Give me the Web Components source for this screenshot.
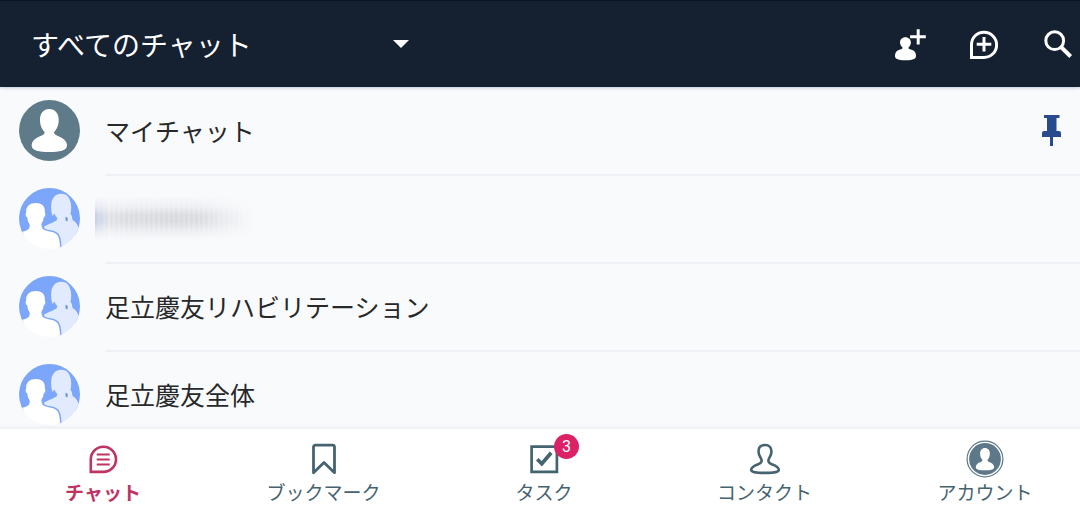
<!DOCTYPE html>
<html lang="ja">
<head>
<meta charset="utf-8">
<meta name="viewport" content="width=device-width, initial-scale=1">
<title>チャット</title>
<style>
  html, body { margin: 0; height: 100%; }
  body { font-family: "Noto Sans CJK JP", sans-serif; color: #262829; background: #f9fafc; }
</style>
</head>
<body>
<chat-app></chat-app>
<script>
const icons = {
  addPerson: `<svg width="32" height="32" viewBox="0 0 32 32" fill="#fff"><path d="M11.3 9.300c-3.200 0-5.300 2.300-5.300 5.200 0 2.400 1.200 3.600 2.400 4.800.6 1.600-1 1.900-2.900 2.500C2.700 22.700 1 24.500 1 27.500c0 3.300 2 4.700 10.500 4.700S22 30.800 22 27.500c0-3-1.700-4.800-4.500-5.700-2-.6-3.500-.9-2.900-2.500 1.200-1.200 2.300-2.400 2.300-4.800 0-2.900-2.300-5.200-5.600-5.200z"/><path d="M22.700 1.200h3v6h6.100v3h-6.100v6.200h-3v-6.200h-6.600v-3h6.600z"/></svg>`,
  addChat: `<svg width="32" height="32" viewBox="0 0 32 32" fill="none" stroke="#fff" stroke-width="3"><path d="M3.500 29.500V17C3.500 9.300 9 4.300 16 4.300A12.600 12.600 0 0 1 16 29.500z"/><path d="M8.700 16.200h14.600M16 9v14.400"/></svg>`,
  search: `<svg width="32" height="32" viewBox="0 0 32 32" fill="none" stroke="#fff"><circle cx="12.700" cy="12.700" r="8.900" stroke-width="3"/><path d="M19 19l9.700 9.500" stroke-width="3.900"/></svg>`,
  chat: `<svg width="38" height="38" viewBox="0 0 38 38" fill="none" stroke="currentColor" stroke-width="2.600"><path d="M6.800 31.900V19A12.600 12.600 0 1 1 19.300 31.900z" /><path d="M12.700 14.500h13M12.700 19.500h13M12.700 24.500h13" stroke-width="1.900"/></svg>`,
  bookmark: `<svg width="38" height="38" viewBox="0 0 38 38" fill="none" stroke="currentColor" stroke-width="2.800" stroke-linejoin="round"><path d="M8.500 32.700V7.200q0-2 2-2h17q2 0 2 2v25.500L19 22.600z"/></svg>`,
  task: `<svg width="38" height="38" viewBox="0 0 38 38" fill="none" stroke="currentColor"><path d="M6.600 6.700h25.300v25.200H6.600z" stroke-width="2.700"/><path d="M12.300 19.300l4.500 4.500 9.400-11" stroke-width="3.700"/></svg>`,
  contact: `<svg width="38" height="38" viewBox="0 0 38 38" fill="none" stroke="currentColor" stroke-width="2.600"><path d="M19 5c-4.300 0-6.500 2.700-6.500 6.500 0 3.200 1.400 5 2.600 7.200 1.200 2.600.1 4.400-2.900 5.500-4.400 1.600-7 3-7 5.600 0 2.300 3.300 3.100 13.800 3.100s13.800-.8 13.800-3.100c0-2.600-2.600-4-7-5.600-3-1.100-4.100-2.900-2.900-5.500 1.200-2.200 2.600-4 2.600-7.200 0-3.800-2.200-6.500-6.500-6.500z"/></svg>`,
};
const person = 'M30.300 9C24.500 9 21 13.500 21 19.500 21 25.500 23 29.500 25.600 32 26 34.500 23 35.400 20 36.700 15.500 38.700 12.700 41.500 12.700 45.500 12.700 50.500 20 52 30.300 52S48 50.500 48 45.500C48 41.500 45 38.700 40.600 36.700 37.600 35.400 34.700 34.500 35.100 32 37.700 29.500 39.700 25.500 39.700 19.500 39.700 13.500 36 9 30.300 9z';
icons.account = `<svg width="38" height="38" viewBox="0 0 38 38"><circle cx="19" cy="19" r="17.900" fill="#fff" stroke="#5d7989" stroke-width="1.200"/><circle cx="19" cy="19" r="15.900" fill="#5d7989"/><path transform="translate(3.200 3.300) scale(.52 .52)" fill="#fff" d="${person}"/></svg>`;

function define(name, render) {
  customElements.define(name, class extends HTMLElement {
    connectedCallback() {
      if (this.shadowRoot) return;
      this.attachShadow({ mode: 'open' }).innerHTML = render(this);
    }
  });
}

define('icon-button', el => `
  <style>
    :host { display: block; }
    button { display: block; padding: 0; border: 0; background: none; cursor: pointer; }
    svg { display: block; overflow: visible; }
  </style>
  <button type="button" aria-label="${el.getAttribute('label')}">${icons[el.getAttribute('icon')]}</button>`);

define('chat-header', () => `
  <style>
    :host { display: block; position: relative; z-index: 1; }
    header { display: flex; align-items: center; justify-content: space-between; box-sizing: border-box;
      min-height: 87px; padding: 0 6px 0 31px; background: #152130; box-shadow: 0 1px 3px #bdc7d7; border-top: 1px solid #071626; }
    .filter { display: grid; align-items: center; flex: 0 1 378px; }
    .filter > * { grid-area: 1 / 1; }
    select { appearance: none; width: 100%; height: 40px; margin: 0; padding: 0 32px 0 0; border: 0;
      background: none; color: #fff; font: 28px/40px "Noto Sans CJK JP", sans-serif; cursor: pointer; }
    option { color: #262829; }
    .filter svg { justify-self: end; pointer-events: none; }
    .actions { display: flex; gap: 42px; }
  </style>
  <header>
    <div class="filter">
      <select aria-label="チャットの絞り込み"><option>すべてのチャット</option></select>
      <svg width="16" height="8" viewBox="0 0 16 8"><path d="M0 0h16L8 8z" fill="#fff"/></svg>
    </div>
    <div class="actions">
      <icon-button icon="addPerson" label="コンタクトを追加"></icon-button>
      <icon-button icon="addChat" label="チャットを追加"></icon-button>
      <icon-button icon="search" label="検索"></icon-button>
    </div>
  </header>`);

define('chat-avatar', el => `
  <style>
    :host { display: block; flex: none; }
    svg { display: block; }
  </style>
  ${el.getAttribute('kind') === 'person'
    ? `<svg width="61" height="61" viewBox="0 0 61 61"><circle cx="30.500" cy="30.500" r="30.500" fill="#5f7b89"/><path fill="#fff" d="${person}"/></svg>`
    : `<svg width="61" height="61" viewBox="0 0 61 61">
        <defs><clipPath id="round"><circle cx="30.500" cy="30.500" r="30.500"/></clipPath></defs>
        <g clip-path="url(#round)">
          <path fill="#7ba6fa" d="M0 0h61v47H0z"/>
          <path fill="#e1ebfd" d="M42 5.700C35.500 5.900 32.500 11 32.200 17c-.2 4 0 8 1.500 11l1.600-2.500 1.700 3.200c2 .5 1.300 3.400-.5 4.300-3.500 1.900-8 3.500-12 6L27 43l9 1.500c4 1 5 4 6 16.500h19V42l-1.500.5c0-5-1.500-7.500-6-10.500l-.8-4.500-1.200-1C52.500 21 52.700 16 50.500 11 49 7.500 46 5.600 42 5.700z"/>
          <path fill="#7198dc" d="M46.300 28.800l2 .8.700 2-1 2-1.400-1z"/>
          <path fill="#fff" stroke="#7ba6fa" stroke-width="2.800" paint-order="stroke" d="M-4 45C2 44.500 6 43.500 9 41.500 11.500 39.500 11 36.500 9.300 34 8.600 32.500 8.500 31 8.300 29.500 6.700 29 6.100 25.500 7.200 24.500 6.700 18.500 10.500 15 16.700 15 23 15 26.500 18.500 25.800 24.500 26.900 25.500 26.300 29 24.700 29.500 24.500 31.500 24 33.500 22.700 35 22 39.500 23.500 41.800 27.500 42.800L34 44.200C40 46 41 50 41.200 64H-4z"/>
        </g></svg>`}`);

define('chat-row', el => `
  <style>
    :host { display: block; }
    a { display: flex; gap: 25px; padding-left: 19px; color: inherit; text-decoration: none; }
    chat-avatar { padding-top: 12px; }
    .body { flex: 1; min-width: 0; display: flex; align-items: center; justify-content: space-between; box-sizing: border-box;
      height: 88px; padding-right: 18px; border-bottom: 2px solid #edf0f4; }
    .name { padding-bottom: 2px; font-size: 25px; line-height: 36px; white-space: nowrap; }
    svg { flex: none; }
  </style>
  <a href="#chat">
    <chat-avatar kind="${el.getAttribute('kind') || 'group'}"></chat-avatar>
    <div class="body">
      <span class="name"><slot></slot></span>
      ${el.hasAttribute('pinned') ? `<svg width="20" height="32" viewBox="0 0 20 32" role="img" aria-label="ピン留め" fill="#284b8d"><path d="M2 0h15.500v3H14.500v13H17q2 0 2 2V22H11v9H8v-9H0v-4q0-2 2-2h3v-13H2z"/></svg>` : ''}
    </div>
  </a>`);

define('hidden-name', () => `
  <style>
    :host { display: block; margin-left: -10px; width: 165px; height: 48px; overflow: hidden; }
    i { display: block; width: 165px; height: 48px;
      background: linear-gradient(90deg, #a9b9ea77, #a9b9ea00 14px),
        repeating-linear-gradient(90deg, #a0a3ab1c 0 2px, #a0a3ab00 4px 5px),
        linear-gradient(90deg, #b9bbc233, #b9bbc255 30px, #b9bbc266 80px, #b9bbc24c 130px, #b9bbc233);
      mask: linear-gradient(#0000 2px, #0005 12px, #000 21px 28px, #0005 38px, #0000 46px), linear-gradient(90deg, #000 105px, #0000 160px);
      mask-composite: intersect; }
  </style>
  <i></i>`);

define('tab-item', el => `
  <style>
    :host { display: block; flex: none; width: 120px; color: ${el.hasAttribute('active') ? '#be3563' : '#466370'}; }
    a { display: flex; flex-direction: column; align-items: center; gap: 2px; color: inherit; text-decoration: none; }
    .icon { position: relative; height: 38px; }
    svg { display: block; }
    .badge { position: absolute; left: 29px; top: -6px; width: 25px; height: 25px; border-radius: 50%; background: #dc2267;
      color: #fff; font: 16px/25px Roboto, sans-serif; text-align: center; }
    .label { font-size: 19px; line-height: 24px; white-space: nowrap; font-weight: ${el.hasAttribute('active') ? 700 : 400}; }
  </style>
  <a href="#${el.getAttribute('icon')}" ${el.hasAttribute('active') ? 'aria-current="page"' : ''}>
    <span class="icon">${icons[el.getAttribute('icon')]}${el.hasAttribute('count') ? `<span class="badge">${el.getAttribute('count')}</span>` : ''}</span>
    <span class="label"><slot></slot></span>
  </a>`);

define('tab-bar', () => `
  <style>
    :host { display: block; position: relative; z-index: 1; }
    nav { display: flex; justify-content: space-between; padding: 11px 35px 11px 43px; background: #fff; border-top: 1px solid #f1f3f5; box-shadow: 0 0 4px #e4e7eb; }
  </style>
  <nav><slot></slot></nav>`);

define('chat-app', () => `
  <style>
    :host { display: flex; flex-direction: column; height: 100vh; }
    main { flex: 1; min-height: 0; overflow-y: auto; scrollbar-width: none; padding-top: 1px; }
  </style>
  <chat-header></chat-header>
  <main>
    <chat-row kind="person" pinned>マイチャット</chat-row>
    <chat-row><hidden-name></hidden-name></chat-row>
    <chat-row>足立慶友リハビリテーション</chat-row>
    <chat-row>足立慶友全体</chat-row>
  </main>
  <tab-bar>
    <tab-item icon="chat" active>チャット</tab-item>
    <tab-item icon="bookmark">ブックマーク</tab-item>
    <tab-item icon="task" count="3">タスク</tab-item>
    <tab-item icon="contact">コンタクト</tab-item>
    <tab-item icon="account">アカウント</tab-item>
  </tab-bar>`);
</script>
</body>
</html>
